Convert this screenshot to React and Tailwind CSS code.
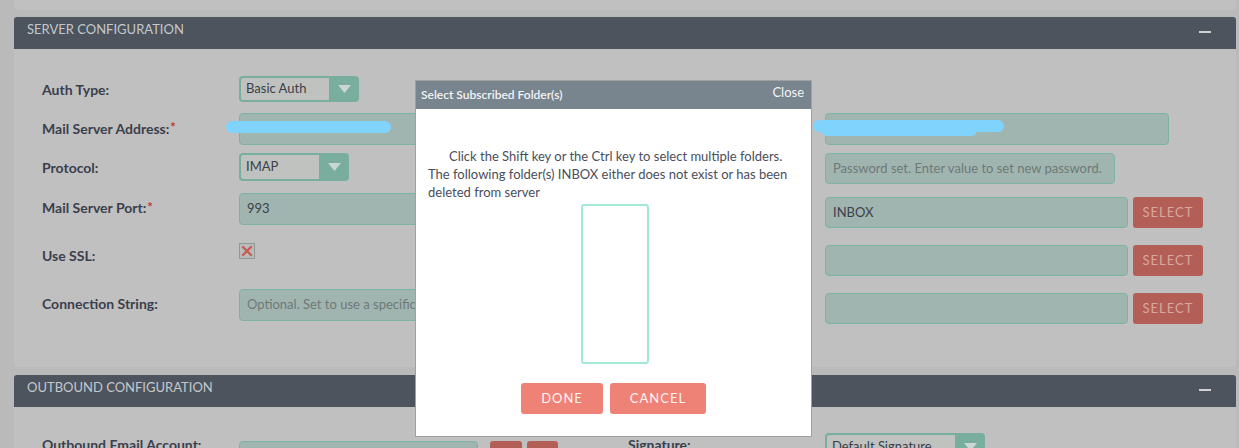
import React from "react";

function Header({ title }) {
  return (
    <div className="flex h-[32px] items-start justify-between rounded-t-[3px] bg-[#4d545e] pl-[13px] pr-[25px]">
      <span className="mt-[3px] text-[13px] text-[#c3c8cd]">{title}</span>
      <span className="mt-[14px] h-[2px] w-[12px] bg-[#d2d2d2]" />
    </div>
  );
}

function Label({ h, children, req }) {
  return (
    <div className={`flex w-[197px] shrink-0 items-center text-[14px] font-bold text-[#3b3f4d] ${h}`}>
      {children}
      {req && <span className="ml-[1px] self-start pt-[8px] text-[13px] font-bold leading-none text-[#c0392b]">*</span>}
    </div>
  );
}

function Select({ w, h, text }) {
  return (
    <div className={`flex rounded-[4px] bg-[#79ae9e] p-[2px] pr-0 ${w} ${h}`}>
      <div className="flex flex-1 items-center rounded-l-[2px] bg-[#bfc2bf] pl-[5px] text-[13px] text-[#3b3f4a]">
        {text}
      </div>
      <div className="flex w-[30px] items-center justify-center">
        <svg width="13" height="8" viewBox="0 0 13 8">
          <polygon points="0,0 13,0 6.5,8" fill="#c9d6d1" />
        </svg>
      </div>
    </div>
  );
}

function Input({ w, h, children, placeholder, mt }) {
  return (
    <div
      className={`flex shrink-0 items-center rounded-[4px] border border-[#7db3a2] bg-[#a1b5b0] px-[7px] text-[13px] ${w} ${h} ${mt || ""}`}
    >
      {placeholder ? (
        <span className="whitespace-nowrap text-[#6e7977]">{placeholder}</span>
      ) : (
        <span className="text-[#3b3f4a]">{children}</span>
      )}
    </div>
  );
}

function RedBtn({ w, h, children, cls }) {
  return (
    <div
      className={`flex shrink-0 items-center justify-center rounded-[3px] bg-[#b35f57] text-[13px] tracking-[1px] text-[#d8a8a2] ${w} ${h} ${cls || ""}`}
    >
      {children}
    </div>
  );
}

export default function App() {
  return (
    <div className="relative h-[448px] w-[1239px] overflow-hidden bg-[#bababa] pl-[14px] pr-[3px] font-['Lato',sans-serif]">
      <div className="h-[10px] rounded-b-[4px] bg-[#c0c0c0]" />

      <div className="mt-[7px] rounded-[3px] bg-[#c0c0c0]">
        <Header title="SERVER CONFIGURATION" />
        <div className="h-[318px] pl-[28px] pt-[27px]">
          {/* Row 1 */}
          <div className="flex h-[37px] items-start">
            <Label h="h-[26px]">Auth Type:</Label>
            <Select w="w-[120px]" h="h-[26px]" text="Basic Auth" />
          </div>
          {/* Row 2 */}
          <div className="flex h-[40px] items-start">
            <Label h="h-[30px]" req>Mail Server Address:</Label>
            <div className="w-[361px]">
              <Input w="w-[361px]" h="h-[32px]" />
            </div>
            <div className="w-[28px]" />
            <div className="w-[197px]" />
            <Input w="w-[344px]" h="h-[32px]" />
          </div>
          {/* Row 3 */}
          <div className="flex h-[40px] items-start">
            <Label h="h-[28px]">Protocol:</Label>
            <div className="w-[361px]">
              <Select w="w-[110px]" h="h-[28px]" text="IMAP" />
            </div>
            <div className="w-[28px]" />
            <div className="w-[197px]" />
            <Input w="w-[290px]" h="h-[31px]" placeholder="Password set. Enter value to set new password." />
          </div>
          {/* Row 4 */}
          <div className="flex h-[50px] items-start">
            <Label h="h-[29px]" req>Mail Server Port:</Label>
            <div className="w-[361px]">
              <Input w="w-[361px]" h="h-[32px]">993</Input>
            </div>
            <div className="w-[28px]" />
            <div className="w-[197px]" />
            <div className="mt-[4px] flex gap-[5px]">
              <Input w="w-[303px]" h="h-[31px]">INBOX</Input>
              <RedBtn w="w-[70px]" h="h-[31px]">SELECT</RedBtn>
            </div>
          </div>
          {/* Row 5 */}
          <div className="flex h-[46px] items-start">
            <Label h="h-[24px]">Use SSL:</Label>
            <div className="w-[361px]">
              <div className="flex h-[16px] w-[16px] items-center justify-center border border-[#8e9996] bg-[#b9bcbb]">
                <svg width="12" height="12" viewBox="0 0 12 12">
                  <path d="M2 2 L10 10 M10 2 L2 10" stroke="#c95b52" strokeWidth="2.4" strokeLinecap="round" />
                </svg>
              </div>
            </div>
            <div className="w-[28px]" />
            <div className="w-[197px]" />
            <div className="mt-[2px] flex gap-[5px]">
              <Input w="w-[303px]" h="h-[31px]" />
              <RedBtn w="w-[70px]" h="h-[31px]">SELECT</RedBtn>
            </div>
          </div>
          {/* Row 6 */}
          <div className="flex h-[36px] items-start">
            <Label h="h-[29px]">Connection String:</Label>
            <div className="w-[361px]">
              <Input w="w-[361px]" h="h-[32px]" placeholder="Optional. Set to use a specific connection string." />
            </div>
            <div className="w-[28px]" />
            <div className="w-[197px]" />
            <div className="mt-[4px] flex gap-[5px]">
              <Input w="w-[303px]" h="h-[31px]" />
              <RedBtn w="w-[70px]" h="h-[31px]">SELECT</RedBtn>
            </div>
          </div>
        </div>
      </div>

      <div className="mt-[8px] rounded-[3px] bg-[#c0c0c0]">
        <Header title="OUTBOUND CONFIGURATION" />
        <div className="h-[80px] pl-[28px] pt-[26px]">
          <div className="flex items-start">
            <div className="flex w-[197px] shrink-0 pt-[1px] text-[14px] font-bold text-[#3b3f4d]">Outbound Email Account:</div>
            <div className="flex w-[361px] pt-[8px]">
              <Input w="w-[239px]" h="h-[32px]" />
              <RedBtn w="w-[32px]" h="h-[32px]" cls="ml-[12px]" />
              <RedBtn w="w-[31px]" h="h-[32px]" cls="ml-[5px]" />
            </div>
            <div className="w-[28px]" />
            <div className="w-[197px] shrink-0 pt-[1px] text-[14px] font-bold text-[#3b3f4d]">Signature:</div>
            <Select w="w-[160px]" h="h-[28px]" text="Default Signature" />
          </div>
        </div>
      </div>

      {/* redaction marks */}
      <div className="absolute left-[226px] top-[121px] h-[12px] w-[165px] rounded-full bg-[#7fd3fc]" />
      <div className="absolute left-[813px] top-[120px] h-[12px] w-[191px] rounded-full bg-[#7fd3fc]" />
      <div className="absolute left-[821px] top-[124px] h-[12px] w-[156px] rounded-full bg-[#7fd3fc]" />

      {/* Modal */}
      <div className="absolute left-[415px] top-[80px] flex h-[357px] w-[397px] flex-col border border-[#a0a0a0] bg-white">
        <div className="flex h-[28px] shrink-0 items-center justify-between bg-[#78848e] pl-[5px] pr-[7px]">
          <span className="text-[12px] font-semibold text-[#f2f4f5]">Select Subscribed Folder(s)</span>
          <span className="-mt-[4px] text-[13px] text-[#f2f4f5]">Close</span>
        </div>
        <div className="flex flex-1 flex-col pt-[38px]">
          <p className="px-[12px] indent-[21px] text-[13px] leading-[18px] text-[#4a4e5a]">
            Click the Shift key or the Ctrl key to select multiple folders. The following folder(s) INBOX either does not exist or has been deleted from server
          </p>
          <div className="mt-[3px] flex justify-center pl-[3px]">
            <div className="h-[160px] w-[68px] rounded-[3px] border-2 border-[#a3e9d7]" />
          </div>
          <div className="mt-[19px] flex justify-center gap-[7px]">
            <div className="flex h-[31px] w-[82px] items-center justify-center rounded-[3px] bg-[#ef8277] text-[13px] tracking-[1px] text-[#fff4f2]">
              DONE
            </div>
            <div className="flex h-[31px] w-[96px] items-center justify-center rounded-[3px] bg-[#ef8277] text-[13px] tracking-[1px] text-[#fff4f2]">
              CANCEL
            </div>
          </div>
        </div>
      </div>
    </div>
  );
}
